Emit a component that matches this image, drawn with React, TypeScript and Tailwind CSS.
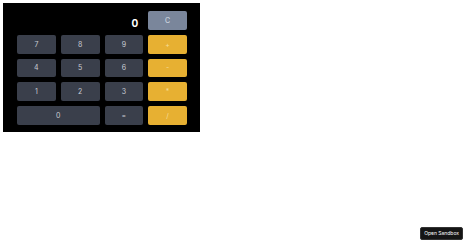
const keys: { label: string; kind: "num" | "op"; wide?: boolean }[] = [
  { label: "7", kind: "num" },
  { label: "8", kind: "num" },
  { label: "9", kind: "num" },
  { label: "+", kind: "op" },
  { label: "4", kind: "num" },
  { label: "5", kind: "num" },
  { label: "6", kind: "num" },
  { label: "-", kind: "op" },
  { label: "1", kind: "num" },
  { label: "2", kind: "num" },
  { label: "3", kind: "num" },
  { label: "*", kind: "op" },
  { label: "0", kind: "num", wide: true },
  { label: "=", kind: "num" },
  { label: "/", kind: "op" },
];

export default function App() {
  return (
    <div className="relative h-[248px] w-[474px] bg-white font-['Inter',sans-serif]">
      <div className="absolute left-[3px] top-[3px] h-[129px] w-[197px] bg-black pb-[7px] pl-[14px] pr-[13px] pt-[8px]">
        <div className="grid h-[114px] w-[170px] grid-cols-4 grid-rows-5 gap-[5px]">
          {/* display */}
          <div className="col-span-3 flex items-end justify-end pb-[2px] pr-[5px] text-[10px] font-bold leading-none text-white">
            0
          </div>
          <button className="flex items-center justify-center rounded-[2px] bg-[#7a869b] text-[7px] leading-none text-[#dde2ea]">
            C
          </button>

          {keys.map((k) => (
            <button
              key={k.label}
              className={
                k.kind === "op"
                  ? "flex items-center justify-center rounded-[2px] bg-[#e7b032] text-[7px] leading-none text-[#f5dc9a]"
                  : k.wide
                    ? "col-span-2 flex items-center justify-center rounded-[2px] bg-[#3a3f4b] text-[7px] leading-none text-[#c9ccd3]"
                    : "flex items-center justify-center rounded-[2px] bg-[#3a3f4b] text-[7px] leading-none text-[#c9ccd3]"
              }
            >
              {k.label}
            </button>
          ))}
        </div>
      </div>

      {/* sandbox overlay button */}
      <button className="absolute bottom-[8px] right-[11px] flex h-[13px] items-center rounded-[2px] border border-[#333] bg-[#151515] px-[3px] font-['Inter',sans-serif] text-[5px] leading-none text-white">
        Open Sandbox
      </button>
    </div>
  );
}
